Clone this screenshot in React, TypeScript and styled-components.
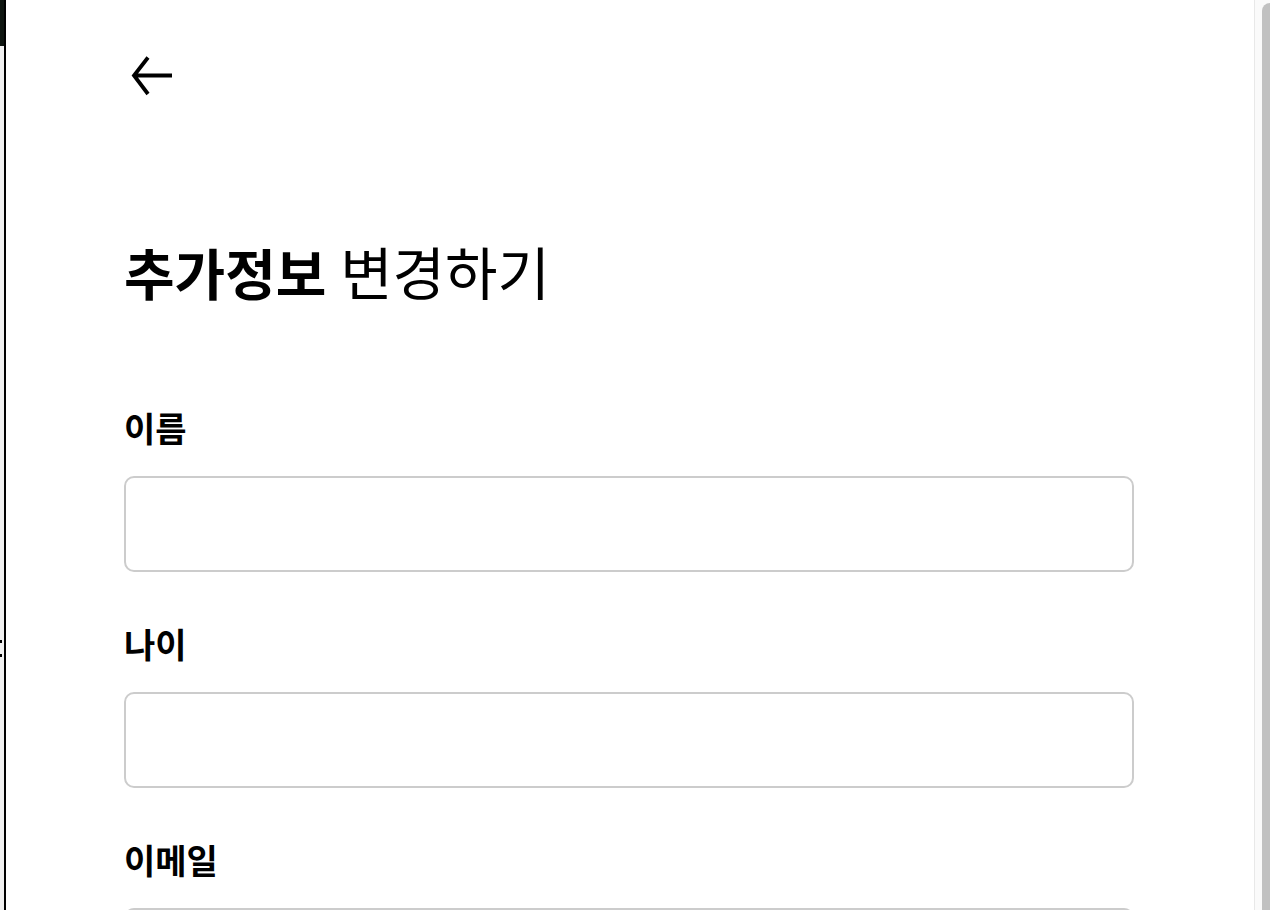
import React from "react";
import styled, { createGlobalStyle } from "styled-components";

const GlobalStyle = createGlobalStyle`
  html, body {
    margin: 0;
    padding: 0;
    height: 100%;
    overflow: hidden;
    background: #ffffff;
  }
  body {
    font-family: "Noto Sans CJK KR", "Noto Sans", sans-serif;
    color: #000000;
  }
`;

const Frame = styled.div`
  display: flex;
  width: 1270px;
  height: 910px;
  overflow: hidden;
`;

const SideStrip = styled.div`
  position: relative;
  width: 4px;
  flex-shrink: 0;
  background: #f0f0f0;
  display: flex;
  flex-direction: column;
`;

const SideTop = styled.div`
  height: 46px;
  background: #0e1510;
`;

const SideTick = styled.div<{ top: number }>`
  position: absolute;
  left: 0;
  top: ${props => props.top}px;
  width: 2px;
  height: 3px;
  background: #000000;
`;

const Divider = styled.div`
  width: 2px;
  flex-shrink: 0;
  background: #000000;
`;

const Main = styled.main`
  flex: 1;
  background: #ffffff;
  padding: 56px 0 0 118px;
  box-sizing: border-box;
`;

const BackButton = styled.button`
  display: block;
  border: none;
  background: none;
  padding: 0;
  margin: 0 0 0 7px;
  width: 42px;
  height: 40px;
  cursor: pointer;
`;

const Title = styled.h1`
  margin: 138px 0 0;
  font-size: 57px;
  line-height: 72px;
  font-weight: 400;
  word-spacing: 1px;
`;

const Strong = styled.strong`
  font-size: 55px;
  font-weight: 700;
`;

const Form = styled.form`
  width: 1010px;
  margin-top: 99px;
  display: flex;
  flex-direction: column;
  gap: 50px;
`;

const Field = styled.label`
  display: flex;
  flex-direction: column;
  gap: 26px;
`;

const LabelText = styled.span`
  font-size: 34px;
  line-height: 44px;
  font-weight: 700;
`;

const Input = styled.input`
  box-sizing: border-box;
  width: 100%;
  height: 96px;
  border: 2px solid #cccccc;
  border-radius: 10px;
  padding: 0 20px;
  font-size: 28px;
  font-family: inherit;
  outline: none;
  background: #ffffff;
`;

const ScrollTrack = styled.div`
  width: 16px;
  flex-shrink: 0;
  box-sizing: border-box;
  border-left: 1px solid #e8e8e8;
  background: #fafafa;
  padding: 3px 0 0 7px;
`;

const ScrollThumb = styled.div`
  height: 100%;
  background: #c1c1c1;
  border-radius: 8px 0 0 0;
`;

function BackArrow() {
  return (
    <svg width="42" height="40" viewBox="0 0 42 40" fill="none">
      <path
        d="M41 19.5H3M17 1.5L3 19.5L17 38"
        stroke="#000"
        strokeWidth="3.8"
        strokeLinecap="butt"
        strokeLinejoin="miter"
      />
    </svg>
  );
}

const fields = [
  { id: "name", label: "이름" },
  { id: "age", label: "나이" },
  { id: "email", label: "이메일" },
];

function App() {
  return (
    <>
      <GlobalStyle />
      <Frame>
        <SideStrip>
          <SideTop />
          <SideTick top={640} />
          <SideTick top={654} />
        </SideStrip>
        <Divider />
        <Main>
          <BackButton type="button" aria-label="뒤로가기">
            <BackArrow />
          </BackButton>
          <Title>
            <Strong>추가정보</Strong> 변경하기
          </Title>
          <Form>
            {fields.map(field => (
              <Field key={field.id}>
                <LabelText>{field.label}</LabelText>
                <Input type="text" name={field.id} />
              </Field>
            ))}
          </Form>
        </Main>
        <ScrollTrack>
          <ScrollThumb />
        </ScrollTrack>
      </Frame>
    </>
  );
}

export default App;
